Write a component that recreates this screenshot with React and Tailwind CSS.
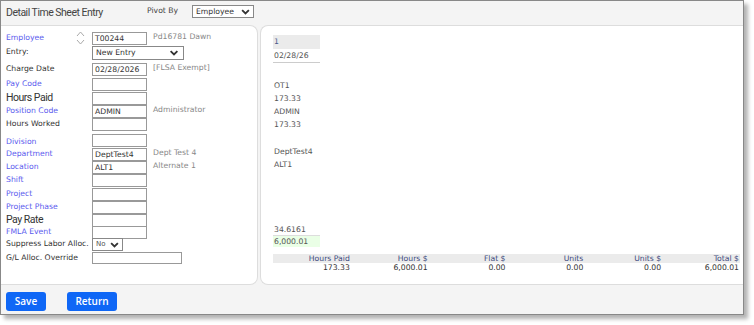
import React from "react";

const Chevron = ({ className = "" }) => (
  <svg viewBox="0 0 12 8" className={className} fill="none">
    <path d="M1.5 1.5 L6 6 L10.5 1.5" stroke="#333" strokeWidth="2.4" />
  </svg>
);

const Spinner = () => (
  <svg viewBox="0 0 9 14" className="w-[9px] h-[14px] -ml-[2px] -mt-[1px]" fill="none">
    <path d="M1 5 L4.5 1 L8 5" stroke="#aaa" strokeWidth="1" />
    <path d="M1 9 L4.5 13 L8 9" stroke="#aaa" strokeWidth="1" />
  </svg>
);

const Box = ({ value = "", w = "w-[55px]", h = "h-[13px]" }) => (
  <div className={`${w} ${h} border border-[#999] bg-white px-[2px] text-[7.7px] leading-[11px] text-[#333]`}>
    {value}
  </div>
);

// label, kind, value, note, row height
const ROWS = [
  { label: "Employee", blue: true, value: "T00244", note: "Pd16781 Dawn", h: 14, spin: true },
  { label: "Entry:", select: "New Entry", h: 17 },
  { label: "Charge Date", value: "02/28/2026", note: "[FLSA Exempt]", h: 15 },
  { label: "Pay Code", blue: true, h: 14 },
  { label: "Hours Paid", big: true, h: 13 },
  { label: "Position Code", blue: true, value: "ADMIN", note: "Administrator", h: 13 },
  { label: "Hours Worked", h: 16 },
  { label: "Division", blue: true, h: 14, low: true },
  { label: "Department", blue: true, value: "DeptTest4", note: "Dept Test 4", h: 13 },
  { label: "Location", blue: true, value: "ALT1", note: "Alternate 1", h: 13 },
  { label: "Shift", blue: true, h: 14 },
  { label: "Project", blue: true, h: 13 },
  { label: "Project Phase", blue: true, h: 13 },
  { label: "Pay Rate", big: true, h: 12 },
  { label: "FMLA Event", blue: true, h: 12 },
  { label: "Suppress Labor Alloc.", no: true, h: 14 },
  { label: "G/L Alloc. Override", wide: true, h: 12 },
];

const TOTALS = [
  ["Hours Paid", "173.33"],
  ["Hours $", "6,000.01"],
  ["Flat $", "0.00"],
  ["Units", "0.00"],
  ["Units $", "0.00"],
  ["Total $", "6,000.01"],
];

const labelClass = (r) => {
  if (r.big) return "text-[10.5px] leading-[12px] text-[#333] font-['Roboto',sans-serif] tracking-[-0.5px]";
  const color = r.blue ? "text-[#5b5bee]" : "text-[#333]";
  const pad = r.low ? "pt-[3px]" : "pt-[1px]";
  return `text-[7.7px] leading-[10px] ${pad} ${color}`;
};

export default function App() {
  return (
    <div className="w-[754px] h-[325px] bg-white font-['DejaVu_Sans',sans-serif]">
      <div className="w-[744px] h-[315px] border border-[#888] bg-[#f4f4f4] shadow-[4px_4px_4px_rgba(0,0,0,0.3)] flex flex-col">
        {/* Header */}
        <div className="h-[24px] flex items-start pt-[4px]">
          <div className="w-[146px] pl-[5px] pt-[1px] text-[10.5px] leading-[13px] text-[#444] font-['Roboto',sans-serif] tracking-[-0.5px]">
            Detail Time Sheet Entry
          </div>
          <div className="text-[7.7px] leading-[10px] text-[#444] w-[45px] pt-[1px]">Pivot By</div>
          <div className="w-[62px] h-[13px] border border-[#888] bg-white flex items-center justify-between px-[3px] text-[7.7px] text-[#333]">
            <span>Employee</span>
            <Chevron className="w-[9px] h-[6px]" />
          </div>
        </div>

        {/* Panels */}
        <div className="h-[260px] flex gap-[2px]">
          <div className="w-[257px] bg-white border-y border-r border-[#ddd] rounded-r-[8px] pt-[6px] pl-[5px]">
            {ROWS.map((r) => (
              <div key={r.label} className="flex items-start" style={{ height: r.h }}>
                <div className={`w-[72px] shrink-0 whitespace-nowrap ${labelClass(r)}`}>{r.label}</div>
                <div className="w-[14px] shrink-0 flex justify-start">{r.spin && <Spinner />}</div>
                {r.select ? (
                  <div className="w-[92px] h-[14px] border border-[#888] bg-white flex items-center justify-between px-[3px] text-[7.7px] text-[#333]">
                    <span>{r.select}</span>
                    <Chevron className="w-[10px] h-[6px] mr-[1px]" />
                  </div>
                ) : r.no ? (
                  <div className="w-[31px] h-[13px] border border-[#888] bg-white flex items-center justify-between px-[3px] text-[7px] text-[#555]">
                    <span>No</span>
                    <Chevron className="w-[9px] h-[6px]" />
                  </div>
                ) : (
                  <Box value={r.value} w={r.wide ? "w-[90px]" : "w-[55px]"} h={r.wide ? "h-[12px]" : "h-[13px]"} />
                )}
                {r.note && (
                  <div className="pl-[6px] text-[7.7px] leading-[10px] text-[#888] whitespace-nowrap">{r.note}</div>
                )}
              </div>
            ))}
          </div>

          <div className="flex-1 bg-white border-y border-l border-[#ddd] rounded-l-[8px] pt-[9px] pl-[12px] pr-[3px] text-[7.7px] text-[#555] flex flex-col">
            <div className="w-[47px]">
              <div className="h-[14px] bg-[#ebebeb] px-[1px] leading-[14px] text-[#4a5a8a]">1</div>
              <div className="h-[14px] border-b border-[#ccc] px-[1px] leading-[13px] text-[#555]">02/28/26</div>
              <div className="h-[16px]" />
              <div className="h-[13px] leading-[13px] px-[1px]">OT1</div>
              <div className="h-[13px] leading-[13px] px-[1px]">173.33</div>
              <div className="h-[13px] leading-[13px] px-[1px]">ADMIN</div>
              <div className="h-[13px] leading-[13px] px-[1px]">173.33</div>
              <div className="h-[14px]" />
              <div className="h-[13px] leading-[13px] px-[1px]">DeptTest4</div>
              <div className="h-[13px] leading-[13px] px-[1px]">ALT1</div>
              <div className="h-[53px]" />
              <div className="h-[12px] leading-[12px] px-[1px] border-b border-[#ddd]">34.6161</div>
              <div className="h-[11px] leading-[11px] px-[1px] bg-[#eaffe6]">6,000.01</div>
            </div>
            <div className="mt-[7px]">
              <div className="grid grid-cols-6 h-[9px] bg-[#ebebeb] text-[#3e4c80] leading-[9px]">
                {TOTALS.map(([h]) => (
                  <div key={h} className="text-right pr-[1px]">{h}</div>
                ))}
              </div>
              <div className="grid grid-cols-6 h-[10px] text-[#333] leading-[10px]">
                {TOTALS.map(([h, v]) => (
                  <div key={h} className="text-right pr-[1px]">{v}</div>
                ))}
              </div>
            </div>
          </div>
        </div>

        {/* Buttons */}
        <div className="flex items-start pt-[7px] pl-[5px] gap-[21px]">
          <button className="w-[40px] h-[19px] rounded-[3px] bg-[#0f67f6] text-white text-[10px] font-semibold font-['Open_Sans',sans-serif]">
            Save
          </button>
          <button className="w-[50px] h-[19px] rounded-[3px] bg-[#0f67f6] text-white text-[10px] font-semibold font-['Open_Sans',sans-serif]">
            Return
          </button>
        </div>
      </div>
    </div>
  );
}
